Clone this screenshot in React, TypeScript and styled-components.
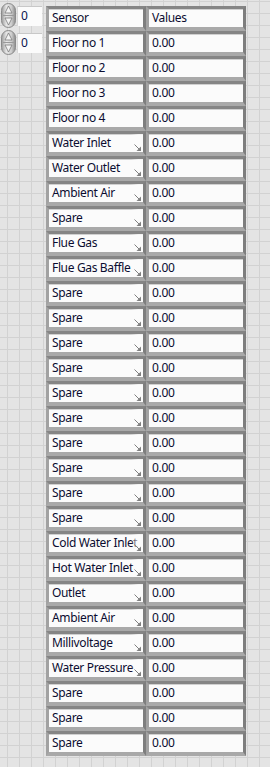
import React from "react";
import styled, { createGlobalStyle } from "styled-components";

const Global = createGlobalStyle`
  html, body { margin: 0; padding: 0; }
  body { width: 270px; height: 767px; overflow: hidden; background: #e4e4e4; }
`;

const Page = styled.div`
  position: relative;
  width: 270px;
  height: 767px;
  display: flex;
  align-items: flex-start;
  background-color: #e4e4e4;
  background-image:
    linear-gradient(to right, #d2d2d2 1px, transparent 1px),
    linear-gradient(to bottom, #d2d2d2 1px, transparent 1px);
  background-size: 12px 12px;
  background-position: 7px 1px;
  font-family: "Noto Sans", "Open Sans", sans-serif;
  overflow: hidden;
`;

const IndexColumn = styled.div`
  width: 43px;
  padding: 3px 0 0 1px;
  box-sizing: border-box;
  display: flex;
  flex-direction: column;
  gap: 2px;
`;

const IndexControl = styled.div`
  display: flex;
  align-items: center;
  height: 25px;
`;

const IndexBox = styled.div`
  width: 25px;
  height: 20px;
  margin-left: 1px;
  box-sizing: border-box;
  background: #fbfbfb;
  border-top: 1px solid #c8c8c8;
  border-left: 1px solid #d8d8d8;
  padding-left: 3px;
  font-size: 12px;
  line-height: 18px;
  color: #0c1450;
`;

const ArrayFrame = styled.div`
  margin-top: 6px;
  display: grid;
  grid-template-columns: repeat(2, 100px);
  grid-auto-rows: 25px;
  padding-left: 3px;
`;

const Cell = styled.div`
  position: relative;
  box-sizing: border-box;
  border-style: solid;
  border-width: 3px 3px 4px 3px;
  border-color: #858585 #7e7e7e #a9a9a9 #a2a2a2;
  background: #fbfbfb;
  box-shadow: inset 0 1px 0 #d0d0d0;
  display: flex;
  align-items: center;
  overflow: hidden;
`;

const CellText = styled.span`
  padding-left: 3px;
  font-size: 12px;
  letter-spacing: -0.35px;
  line-height: 18px;
  white-space: nowrap;
  color: #0a0c30;
`;

const Fade = styled.div`
  position: absolute;
  right: 0;
  top: 0;
  bottom: 0;
  width: 12px;
  background: linear-gradient(to right, rgba(251, 251, 251, 0), rgba(251, 251, 251, 0.8) 60%);
`;

const ArrowMark = styled.svg`
  position: absolute;
  right: 2px;
  bottom: 1px;
  width: 7px;
  height: 7px;
`;

const Spinner = () => (
  <svg width="15" height="25" viewBox="0 0 15 25">
    <defs>
      <linearGradient id="sg" x1="0" x2="1" y1="0" y2="0">
        <stop offset="0" stopColor="#9a9a9a" />
        <stop offset="0.35" stopColor="#e6e6e6" />
        <stop offset="0.7" stopColor="#cfcfcf" />
        <stop offset="1" stopColor="#8a8a8a" />
      </linearGradient>
    </defs>
    <rect x="0.5" y="0.5" width="14" height="24" rx="7" ry="7" fill="url(#sg)" stroke="#8a8a8a" />
    <line x1="2" y1="12.5" x2="13" y2="12.5" stroke="#9a9a9a" />
    <path d="M7.5 3 L11 10 L4 10 Z" fill="#f2f2f2" stroke="#7a7a7a" strokeWidth="0.8" />
    <path d="M7.5 22 L11 15 L4 15 Z" fill="#f2f2f2" stroke="#7a7a7a" strokeWidth="0.8" />
  </svg>
);

const Arrow = () => (
  <ArrowMark viewBox="0 0 7 7">
    <line x1="0.5" y1="0.5" x2="5.5" y2="5.5" stroke="#808080" strokeWidth="1" />
    <path d="M7 7 L2.5 7 L7 2.5 Z" fill="#808080" />
  </ArrowMark>
);

type Row = { name: string; arrow?: boolean };

const rows: Row[] = [
  { name: "Floor no 1" },
  { name: "Floor no 2" },
  { name: "Floor no 3" },
  { name: "Floor no 4" },
  { name: "Water Inlet", arrow: true },
  { name: "Water Outlet", arrow: true },
  { name: "Ambient Air", arrow: true },
  { name: "Spare", arrow: true },
  { name: "Flue Gas", arrow: true },
  { name: "Flue Gas Baffle", arrow: true },
  { name: "Spare", arrow: true },
  { name: "Spare", arrow: true },
  { name: "Spare", arrow: true },
  { name: "Spare", arrow: true },
  { name: "Spare", arrow: true },
  { name: "Spare", arrow: true },
  { name: "Spare", arrow: true },
  { name: "Spare", arrow: true },
  { name: "Spare", arrow: true },
  { name: "Spare", arrow: true },
  { name: "Cold Water Inlet", arrow: true },
  { name: "Hot Water Inlet", arrow: true },
  { name: "Outlet", arrow: true },
  { name: "Ambient Air", arrow: true },
  { name: "Millivoltage", arrow: true },
  { name: "Water Pressure", arrow: true },
  { name: "Spare" },
  { name: "Spare" },
  { name: "Spare" },
];

export default function App() {
  return (
    <>
      <Global />
      <Page>
        <IndexColumn>
          <IndexControl>
            <Spinner />
            <IndexBox>0</IndexBox>
          </IndexControl>
          <IndexControl>
            <Spinner />
            <IndexBox>0</IndexBox>
          </IndexControl>
        </IndexColumn>
        <ArrayFrame>
          <Cell>
            <CellText>Sensor</CellText>
          </Cell>
          <Cell>
            <CellText>Values</CellText>
          </Cell>
          {rows.map((r, i) => (
            <React.Fragment key={i}>
              <Cell>
                <CellText>{r.name}</CellText>
                {r.arrow && <Fade />}
                {r.arrow && <Arrow />}
              </Cell>
              <Cell>
                <CellText>0.00</CellText>
              </Cell>
            </React.Fragment>
          ))}
        </ArrayFrame>
      </Page>
    </>
  );
}
